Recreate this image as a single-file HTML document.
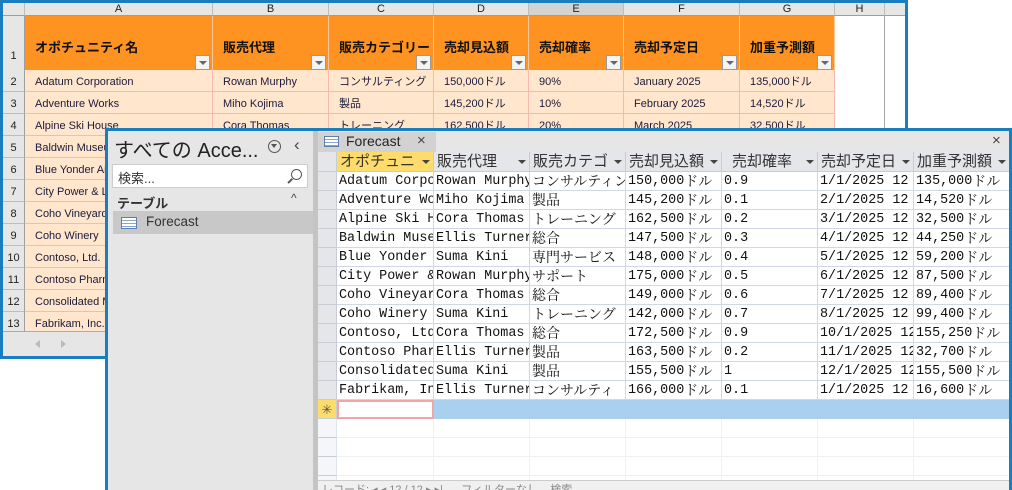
<!DOCTYPE html>
<html><head><meta charset="utf-8"><style>
*{margin:0;padding:0;box-sizing:border-box}
body{width:1012px;height:490px;background:#fff;position:relative;overflow:hidden;font-family:"Liberation Sans","Noto Sans CJK JP",sans-serif}
.a{position:absolute}
#xl{left:0;top:0;width:908px;height:359px;border:3px solid #1a7dc0;background:#fff;overflow:hidden}
.ch{position:absolute;top:0;height:13px;background:#e6e6e6;border-right:1px solid #bdbdbd;border-bottom:1px solid #9e9e9e;font-size:11px;text-align:center;line-height:12px;color:#222}
.rh{position:absolute;left:0;width:22px;background:#e6e6e6;border-bottom:1px solid #bdbdbd;border-right:1px solid #9e9e9e;font-size:11px;text-align:center;color:#222}
.hc{position:absolute;top:13px;height:55px;background:#ff9321;border-right:1px solid #f8c79a;font-size:13px;font-weight:bold;color:#111;padding:0 0 0 10px;line-height:64px;white-space:nowrap;overflow:hidden}
.dd{position:absolute;right:2px;bottom:1px;width:15px;height:15px;background:#f4f4f4;border:1px solid #999}
.dd:after{content:"";position:absolute;left:3px;top:5px;border:4px solid transparent;border-top:4px solid #666}
.dc{position:absolute;height:22px;background:#ffe6cd;border-right:1px solid #f6b8b0;border-bottom:1px solid #f6b8b0;font-size:11px;color:#1b1b3a;padding:0 0 0 10px;line-height:24px;white-space:nowrap;overflow:hidden}
#ac{left:105px;top:128px;width:907px;height:362px;border:3px solid #1a7dc0;border-bottom:none;background:#e6e6e6;overflow:hidden}
.g{position:absolute;height:19px;border-right:1px solid #d0d7e5;border-bottom:1px solid #d0d7e5;background:#fff;font-family:"Liberation Mono","Noto Serif CJK JP",monospace;font-size:13.4px;line-height:19px;padding-left:2px;white-space:nowrap;overflow:hidden;color:#111}
.g span{font-family:"Noto Serif CJK JP",serif;font-size:14px;line-height:18px;vertical-align:top}
.gh{position:absolute;top:21px;height:20px;background:#e4e6ea;border-right:1px solid #c8ccd4;border-bottom:1px solid #c8ccd4;font-size:15px;line-height:20px;padding-left:3px;white-space:nowrap;overflow:hidden;color:#333}
.gh i{position:absolute;right:3px;top:8px;border:4px solid transparent;border-top:4px solid #444;width:0;height:0}
.sel{position:absolute;left:0;width:19px;height:19px;background:#e4e6ea;border-bottom:1px solid #c8ccd4;border-right:1px solid #c8ccd4}
</style></head><body>
<div id="xl" class="a">
<div class="ch" style="left:0;width:22px"></div>
<div class="ch" style="left:22px;width:188px">A</div>
<div class="ch" style="left:210px;width:116px">B</div>
<div class="ch" style="left:326px;width:105px">C</div>
<div class="ch" style="left:431px;width:95px">D</div>
<div class="ch" style="left:526px;width:95px;background:#d3d3d3">E</div>
<div class="ch" style="left:621px;width:116px">F</div>
<div class="ch" style="left:737px;width:95px">G</div>
<div class="ch" style="left:832px;width:50px">H</div>
<div class="ch" style="left:882px;width:30px"></div>
<div class="rh" style="top:13px;height:55px;line-height:80px">1</div>
<div class="hc" style="left:22px;width:188px">オポチュニティ名<span class="dd"></span></div>
<div class="hc" style="left:210px;width:116px">販売代理<span class="dd"></span></div>
<div class="hc" style="left:326px;width:105px">販売カテゴリー<span class="dd"></span></div>
<div class="hc" style="left:431px;width:95px">売却見込額<span class="dd"></span></div>
<div class="hc" style="left:526px;width:95px">売却確率<span class="dd"></span></div>
<div class="hc" style="left:621px;width:116px">売却予定日<span class="dd"></span></div>
<div class="hc" style="left:737px;width:95px">加重予測額<span class="dd"></span></div>
<div class="a" style="left:832px;top:13px;width:50px;height:318px;border-right:1px solid #aaa"></div>
<div id="rows"></div>
<div class="a" style="left:0;top:328px;width:905px;height:28px;background:#e6e6e6;border-top:1px solid #aaa"></div>
<div class="a" style="left:28px;top:337px;border:4px solid transparent;border-right:5px solid #bbb"></div>
<div class="a" style="left:58px;top:337px;border:4px solid transparent;border-left:5px solid #bbb"></div>
</div>
<div id="ac" class="a">
<div class="a" style="left:0;top:0;width:202px;height:362px;background:#e6e6e6"></div>
<div class="a" style="left:6px;top:3px;font-size:20px;color:#222;white-space:nowrap">すべての Acce...</div>
<div class="a" style="left:160px;top:9px;width:13px;height:13px;border:1.5px solid #555;border-radius:50%"></div>
<div class="a" style="left:163px;top:13px;border:3.5px solid transparent;border-top:4px solid #555"></div>
<div class="a" style="left:186px;top:4px;font-size:17px;color:#444">‹</div>
<div class="a" style="left:4px;top:33px;width:196px;height:24px;background:#fff;border:1px solid #ccc;font-size:13px;padding:3px 0 0 5px;color:#333">検索...</div>
<div class="a" style="left:183px;top:38px;width:11px;height:11px;border:1.5px solid #555;border-radius:50%"></div>
<div class="a" style="left:179px;top:49px;width:6px;height:1.5px;background:#555;transform:rotate(-45deg)"></div>
<div class="a" style="left:9px;top:62px;font-size:13px;font-weight:bold;color:#333">テーブル</div>
<div class="a" style="left:183px;top:60px;font-size:12px;color:#444">^</div>
<div class="a" style="left:5px;top:80px;width:200px;height:23px;background:#c8c8c8"></div>
<div class="a" style="left:13px;top:86px;width:16px;height:12px;border:1px solid #5a7fb5;background:repeating-linear-gradient(#fff 0 2px,#8aa6d0 2px 3px)"></div>
<div class="a" style="left:38px;top:83px;font-size:13.5px;color:#333">Forecast</div>
<div class="a" style="left:205px;top:0;width:5px;height:362px;background:#c4c4c4"></div>
<div class="a" style="left:210px;top:0;width:700px;height:21px;background:#e6e6e6"></div>
<div class="a" style="left:210px;top:1px;width:118px;height:20px;background:#d2d2d2"></div>
<div class="a" style="left:216px;top:5px;width:15px;height:11px;border:1px solid #5a7fb5;background:repeating-linear-gradient(#fff 0 2px,#8aa6d0 2px 3px)"></div>
<div class="a" style="left:238px;top:2px;font-size:14px;color:#222">Forecast</div>
<div class="a" style="left:309px;top:1px;font-size:15px;color:#444">×</div>
<div class="a" style="left:884px;top:1px;font-size:15px;color:#444">×</div>
<div class="a" style="left:210px;top:21px;width:694px;height:338px;background:#fff;overflow:hidden" id="grid"></div>
<div class="a" style="left:210px;top:349px;width:694px;height:13px;background:#f0f0f0;border-top:1px solid #ccc;font-size:11px;color:#888;white-space:nowrap;padding-left:4px;overflow:hidden">レコード: ◂ ◂ 12 / 12 ▸ ▸| &nbsp;&nbsp;&nbsp;&nbsp; フィルターなし &nbsp;&nbsp; 検索</div>
</div>
<script>
var xr=[["Adatum Corporation","Rowan Murphy","コンサルティング","150,000ドル","90%","January 2025","135,000ドル"],["Adventure Works","Miho Kojima","製品","145,200ドル","10%","February 2025","14,520ドル"],["Alpine Ski House","Cora Thomas","トレーニング","162,500ドル","20%","March 2025","32,500ドル"],["Baldwin Museum"],["Blue Yonder Airlines"],["City Power & Light"],["Coho Vineyard"],["Coho Winery"],["Contoso, Ltd."],["Contoso Pharmaceuticals"],["Consolidated Messenger"],["Fabrikam, Inc."]];
var L=[22,210,326,431,526,621,737],W=[188,116,105,95,95,116,95];
var h="";
for(var i=0;i<12;i++){var t=67+i*22;h+='<div class="rh" style="top:'+t+'px;height:22px;line-height:24px">'+(i+2)+'</div>';
for(var j=0;j<7;j++)h+='<div class="dc" style="left:'+L[j]+'px;top:'+t+'px;width:'+W[j]+'px">'+(xr[i][j]||"")+'</div>';}
document.getElementById("rows").innerHTML=h;
var ar=[["Adatum Corporation","Rowan Murphy","コンサルティング","150,000ドル","0.9","1/1/2025 12","135,000ドル"],["Adventure Works","Miho Kojima","製品","145,200ドル","0.1","2/1/2025 12","14,520ドル"],["Alpine Ski House","Cora Thomas","トレーニング","162,500ドル","0.2","3/1/2025 12","32,500ドル"],["Baldwin Museum","Ellis Turner","総合","147,500ドル","0.3","4/1/2025 12","44,250ドル"],["Blue Yonder Air","Suma Kini","専門サービス","148,000ドル","0.4","5/1/2025 12","59,200ドル"],["City Power & Li","Rowan Murphy","サポート","175,000ドル","0.5","6/1/2025 12","87,500ドル"],["Coho Vineyard","Cora Thomas","総合","149,000ドル","0.6","7/1/2025 12","89,400ドル"],["Coho Winery","Suma Kini","トレーニング","142,000ドル","0.7","8/1/2025 12","99,400ドル"],["Contoso, Ltd.","Cora Thomas","総合","172,500ドル","0.9","10/1/2025 12","155,250ドル"],["Contoso Pharma","Ellis Turner","製品","163,500ドル","0.2","11/1/2025 12","32,700ドル"],["Consolidated Me","Suma Kini","製品","155,500ドル","1","12/1/2025 12","155,500ドル"],["Fabrikam, Inc.","Ellis Turner","コンサルティ","166,000ドル","0.1","1/1/2025 12","16,600ドル"]];
var GL=[19,116,212,308,404,500,596],GW=[97,96,96,96,96,96,96];
var hd=["オポチュニ","販売代理","販売カテゴ","売却見込額","売却確率","売却予定日","加重予測額"];
function wrap(s){return s.replace(/([^\x00-\x7f]+)/g,'<span>$1</span>');}
var g='<div class="sel" style="top:0;height:20px"></div>';
for(var j=0;j<7;j++)g+='<div class="gh" style="top:0;left:'+GL[j]+'px;width:'+GW[j]+'px;'+(j==0?'background:#fedc6c;':'')+(j==4?'padding-left:10px;':'')+'">'+hd[j]+'<i></i></div>';
for(var i=0;i<12;i++){var t=20+i*19;g+='<div class="sel" style="top:'+t+'px"></div>';
for(var j=0;j<7;j++)g+='<div class="g" style="top:'+t+'px;left:'+GL[j]+'px;width:'+GW[j]+'px">'+wrap(ar[i][j])+'</div>';}
var t=248;g+='<div class="sel" style="top:'+t+'px;background:#fedc6c;font-size:13px;text-align:center;line-height:19px;color:#555">✳</div>';
g+='<div class="a" style="left:19px;top:'+t+'px;width:675px;height:19px;background:#a9d0ef"></div>';
g+='<div class="a" style="left:19px;top:'+t+'px;width:97px;height:19px;background:#fff;border:2px solid #f2a5a5"></div>';
for(var i=1;i<6;i++){var tt=t+i*19;g+='<div class="sel" style="top:'+tt+'px;background:#f4f6fa;border-right:1px solid #e0e4ec"></div>';for(var j=0;j<7;j++)g+='<div class="g" style="top:'+tt+'px;left:'+GL[j]+'px;width:'+GW[j]+'px;border-color:#eef0f4"></div>';}
document.getElementById("grid").innerHTML=g;
</script>
</body></html>
